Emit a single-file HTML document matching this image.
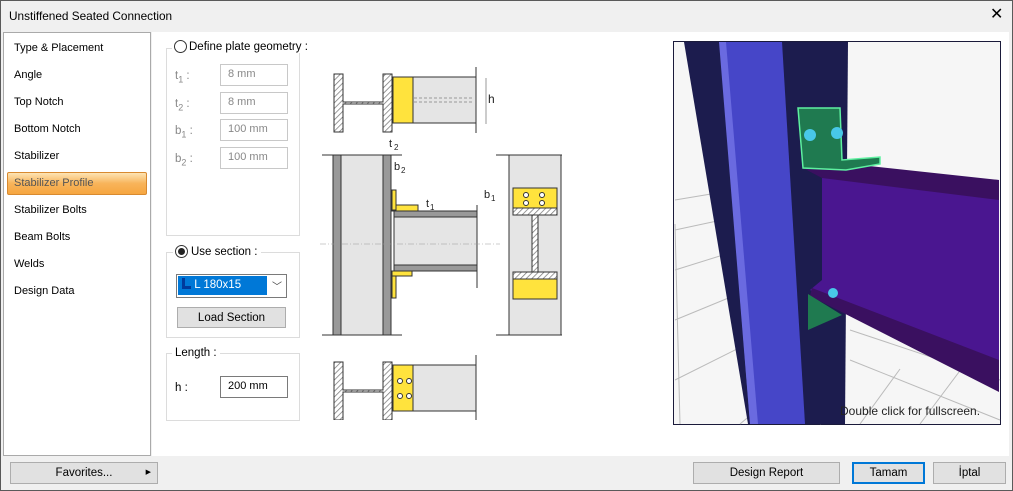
<!DOCTYPE html><html><head><meta charset="utf-8"><style>
*{box-sizing:border-box;margin:0;padding:0}
body{width:1013px;height:491px;overflow:hidden;background:#f0f0f0;font-family:"Liberation Sans",sans-serif;font-size:11.5px;color:#000;position:relative}
.a{position:absolute}
.win{left:0;top:0;width:1013px;height:491px;border:1px solid #5a5a5a;background:#f0f0f0}
.title{left:9px;top:9px;font-size:11.8px}
.close{left:990px;top:4px;font-size:16px}
.list{left:3px;top:32px;width:148px;height:424px;background:#fff;border:1px solid #aaa}
.li{position:absolute;left:10px;font-size:11px}
.sel{left:3px;top:139px;width:140px;height:23px;background:linear-gradient(#fde4b4,#f8b45a 50%,#f6a640);border:1px solid #d88a30;border-radius:2px}
.main{left:152px;top:32px;width:857px;height:424px;background:#fff}
.grp{border:1px solid #dcdcdc}
.lbl{color:#888;font-size:11.5px}
.inp{border:1px solid #c8c8c8;width:68px;height:22px;color:#888;font-size:11px;padding:3px 0 0 7px;background:#fff}
.btn{background:#e1e1e1;border:1px solid #adadad;text-align:center;font-size:11.5px;padding-top:4px}
.radio{width:13px;height:13px;border:1px solid #333;border-radius:50%;background:#fff}
sub{font-size:9px}
</style></head><body>
<div class="a win"></div>
<div class="a title">Unstiffened Seated Connection</div>
<div class="a close">✕</div>
<div class="a list">
<div class="a sel"></div>
<div class="li" style="top:9px">Type &amp; Placement</div>
<div class="li" style="top:36px">Angle</div>
<div class="li" style="top:63px">Top Notch</div>
<div class="li" style="top:90px">Bottom Notch</div>
<div class="li" style="top:117px">Stabilizer</div>
<div class="li" style="top:144px;color:#555">Stabilizer Profile</div>
<div class="li" style="top:171px">Stabilizer Bolts</div>
<div class="li" style="top:198px">Beam Bolts</div>
<div class="li" style="top:225px">Welds</div>
<div class="li" style="top:252px">Design Data</div>
</div>
<div class="a main"></div>
<div class="a grp" style="left:166px;top:48px;width:134px;height:188px"></div>
<div class="a" style="left:172px;top:40px;background:#fff;padding:0 2px;display:flex;align-items:center;gap:2px"><div class="radio"></div><span>Define plate geometry :</span></div>
<div class="a lbl" style="left:175px;top:70px">t<sub>1</sub> :</div>
<div class="a lbl" style="left:175px;top:98px">t<sub>2</sub> :</div>
<div class="a lbl" style="left:175px;top:125px">b<sub>1</sub> :</div>
<div class="a lbl" style="left:175px;top:153px">b<sub>2</sub> :</div>
<div class="a inp" style="left:220px;top:64px">8 mm</div>
<div class="a inp" style="left:220px;top:92px">8 mm</div>
<div class="a inp" style="left:220px;top:119px">100 mm</div>
<div class="a inp" style="left:220px;top:147px">100 mm</div>
<div class="a grp" style="left:166px;top:252px;width:134px;height:86px"></div>
<div class="a" style="left:173px;top:245px;background:#fff;padding:0 4px 0 2px;display:flex;align-items:center;gap:3px"><div class="radio" style="position:relative"><div class="a" style="left:2px;top:2px;width:7px;height:7px;border-radius:50%;background:#222"></div></div><span>Use section :</span></div>
<div class="a" style="left:176px;top:274px;width:111px;height:24px;border:1px solid #7a7a7a;background:#fff"></div>
<div class="a" style="left:178px;top:276px;width:89px;height:19px;background:#0078d7;color:#fff;padding:2px 0 0 4px"><span style="display:inline-block;width:9px;height:11px;border-left:3px solid #003a9c;border-bottom:3px solid #003a9c;vertical-align:-1px"></span> L 180x15</div>
<div class="a" style="left:272px;top:278px;color:#444;font-size:10px">﹀</div>
<div class="a btn" style="left:177px;top:307px;width:109px;height:21px">Load Section</div>
<div class="a grp" style="left:166px;top:353px;width:134px;height:68px"></div>
<div class="a" style="left:172px;top:347px;background:#fff;padding:0 3px">Length :</div>
<div class="a" style="left:175px;top:382px">h :</div>
<div class="a inp" style="left:220px;top:376px;border-color:#7a7a7a;color:#000">200 mm</div>
<svg class="a" style="left:320px;top:60px" width="260" height="360" viewBox="0 0 260 360">
<defs><pattern id="h" width="4" height="4" patternUnits="userSpaceOnUse" patternTransform="rotate(45)"><rect width="4" height="4" fill="#fff"/><line x1="0" y1="0" x2="0" y2="4" stroke="#777" stroke-width="1.5"/></pattern></defs>
<g stroke="#333" stroke-width="1">
<path d="M14 14h9v28h40v-28h9v58h-9v-28h-40v28h-9z" fill="url(#h)"/>
<rect x="73" y="17" width="20" height="46" fill="#ffe33d"/>
<rect x="93" y="17" width="63" height="46" fill="#e5e5e5"/>
<line x1="156" y1="7" x2="156" y2="73"/>
<path d="M94 38h60M94 42h60" stroke="#999" stroke-dasharray="3 2"/>
<text x="168" y="43" font-size="12" stroke="none" fill="#222" font-family="Liberation Sans">h</text>
<line x1="166" y1="18" x2="166" y2="64" stroke-width=".5"/>
<text x="69" y="87" font-size="11" stroke="none" fill="#222" font-family="Liberation Sans">t</text><text x="74" y="90" font-size="8" stroke="none" fill="#222">2</text>
<path d="M2 95h80M2 275h80" />
<rect x="13" y="95" width="8" height="180" fill="#999"/>
<rect x="21" y="95" width="42" height="180" fill="#e5e5e5"/>
<rect x="63" y="95" width="8" height="180" fill="#999"/>
<rect x="72" y="145" width="26" height="6" fill="#ffe33d"/>
<rect x="72" y="130" width="4" height="20" fill="#ffe33d"/>
<rect x="74" y="151" width="83" height="60" fill="#e5e5e5"/>
<rect x="74" y="151" width="83" height="6" fill="#999"/>
<rect x="74" y="205" width="83" height="6" fill="#999"/>
<rect x="72" y="211" width="20" height="5" fill="#ffe33d"/>
<rect x="72" y="216" width="4" height="22" fill="#ffe33d"/>
<line x1="157" y1="145" x2="157" y2="228"/>
<line x1="0" y1="184" x2="180" y2="184" stroke="#999" stroke-dasharray="6 2 1 2" stroke-width=".6"/>
<text x="74" y="110" font-size="11" stroke="none" fill="#222" font-family="Liberation Sans">b</text><text x="81" y="113" font-size="8" stroke="none" fill="#222">2</text>
<text x="106" y="147" font-size="11" stroke="none" fill="#222" font-family="Liberation Sans">t</text><text x="110" y="150" font-size="8" stroke="none" fill="#222">1</text>
<path d="M176 95h66M176 275h66"/>
<rect x="189" y="95" width="52" height="180" fill="#e5e5e5"/>
<rect x="193" y="128" width="44" height="20" fill="#ffe33d"/>
<rect x="193" y="148" width="44" height="7" fill="url(#h)"/>
<rect x="212" y="155" width="6" height="57" fill="url(#h)"/>
<rect x="193" y="212" width="44" height="7" fill="url(#h)"/>
<rect x="193" y="219" width="44" height="20" fill="#ffe33d"/>
<g fill="#fff"><circle cx="206" cy="135" r="2.5"/><circle cx="222" cy="135" r="2.5"/><circle cx="206" cy="143" r="2.5"/><circle cx="222" cy="143" r="2.5"/></g>
<text x="164" y="138" font-size="11" stroke="none" fill="#222" font-family="Liberation Sans">b</text><text x="171" y="141" font-size="8" stroke="none" fill="#222">1</text>
<path d="M14 302h9v28h40v-28h9v58h-9v-28h-40v28h-9z" fill="url(#h)"/>
<rect x="73" y="305" width="20" height="46" fill="#ffe33d"/>
<rect x="93" y="305" width="63" height="46" fill="#e5e5e5"/>
<line x1="156" y1="295" x2="156" y2="360"/>
<g fill="#fff"><circle cx="80" cy="321" r="2.5"/><circle cx="89" cy="321" r="2.5"/><circle cx="80" cy="336" r="2.5"/><circle cx="89" cy="336" r="2.5"/></g>
</g></svg>
<svg class="a" style="left:673px;top:41px" width="328" height="384" viewBox="673 41 328 384">
<rect x="673" y="41" width="328" height="384" fill="#f6f6f6" stroke="#1a1a3a" stroke-width="2"/>
<g stroke="#bbb" stroke-width="1"><path d="M675 200l60 -10M675 230l70 -15M675 270l80 -25M675 320l85 -35M675 380l90 -45M740 424l30-25M820 424l20-20M860 424l40-55M920 424l60-80M680 424l-5 -200M850 330l150 50M850 360l150 60"/></g>
<polygon points="684,42 848,42 845,424 748,424" fill="#1c1c4e"/>
<polygon points="720,42 782,42 805,424 750,424" fill="#4646c8"/>
<polygon points="719,42 726,42 758,424 750,424" fill="#6a6ae0"/>
<polygon points="822,168 999,180 999,390 990,386 810,290 822,280" fill="#4a1690"/>
<polygon points="803,168 860,165 999,180 999,200 822,178" fill="#3a1060"/>
<polygon points="812,288 999,360 999,392 810,296" fill="#3a1060"/>
<polygon points="798,108 840,108 842,160 880,157 880,164 846,170 803,168" fill="#1f7a50" stroke="#5ef0a0" stroke-width="1.5"/>
<circle cx="810" cy="135" r="6" fill="#48c8e8"/><circle cx="837" cy="133" r="6" fill="#48c8e8"/>
<circle cx="833" cy="293" r="5" fill="#48c8e8"/>
<polygon points="808,294 842,315 808,330" fill="#1f7a50"/>
<text x="840" y="415" font-size="12" fill="#222" font-family="Liberation Sans">Double click for fullscreen.</text>
</svg>
<div class="a btn" style="left:10px;top:462px;width:148px;height:22px">Favorites...<span style="position:absolute;right:6px;top:5px;font-size:7px">▶</span></div>
<div class="a btn" style="left:693px;top:462px;width:147px;height:22px">Design Report</div>
<div class="a btn" style="left:852px;top:462px;width:73px;height:22px;border:2px solid #0078d7;padding-top:3px">Tamam</div>
<div class="a btn" style="left:933px;top:462px;width:73px;height:22px">İptal</div>
</body></html>
